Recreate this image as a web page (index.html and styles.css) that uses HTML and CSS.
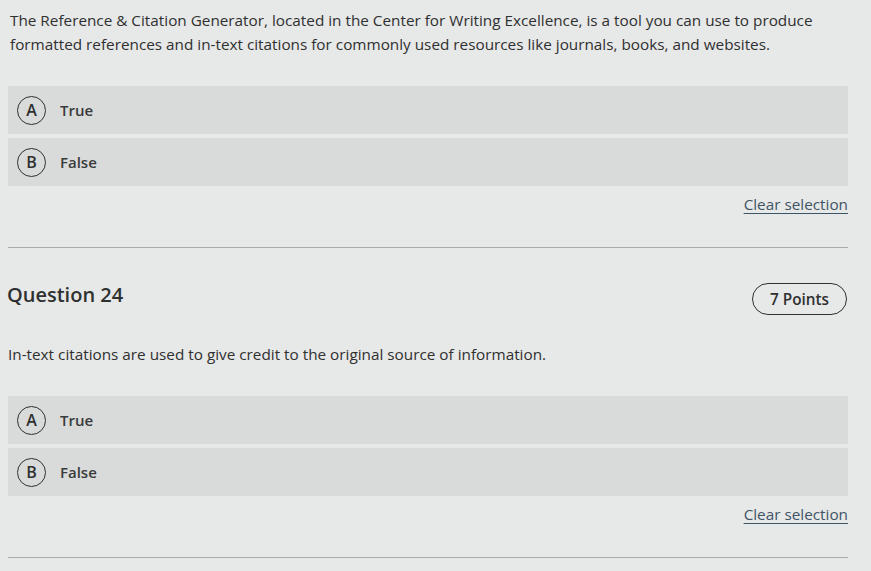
FILE: index.html
```html
<!DOCTYPE html>
<html>
<head>
<meta charset="utf-8">
<link rel="stylesheet" href="styles.css">
</head>
<body>
<div class="page">
  <section class="question">
    <p class="prompt">The Reference &amp; Citation Generator, located in the Center for Writing Excellence, is a tool you can use to produce formatted references and in-text citations for commonly used resources like journals, books, and websites.</p>
    <div class="options">
      <div class="option"><span class="letter">A</span><span class="label">True</span></div>
      <div class="option"><span class="letter">B</span><span class="label">False</span></div>
    </div>
    <div class="clear-row"><a class="clear" href="#">Clear selection</a></div>
  </section>
  <hr class="divider">
  <section class="question q2">
    <div class="head">
      <h2 class="title">Question 24</h2>
      <span class="points">7 Points</span>
    </div>
    <p class="prompt">In-text citations are used to give credit to the original source of information.</p>
    <div class="options">
      <div class="option"><span class="letter">A</span><span class="label">True</span></div>
      <div class="option"><span class="letter">B</span><span class="label">False</span></div>
    </div>
    <div class="clear-row"><a class="clear" href="#">Clear selection</a></div>
  </section>
  <hr class="divider">
</div>
</body>
</html>
```
FILE: styles.css
```css
html, body {
  margin: 0;
  padding: 0;
  background: #e7e8e8;
  height: 100%;
  overflow: hidden;
}
body {
  font-family: "Open Sans", "Liberation Sans", sans-serif;
  color: #2f3030;
}
.page {
  width: 840px;
  padding: 8px 0 0 8px;
}
.prompt {
  margin: 0 0 0 2px;
  font-size: 15.3px;
  line-height: 24px;
}
.options {
  margin-top: 30px;
  display: flex;
  flex-direction: column;
  gap: 4px;
}
.option {
  height: 48px;
  background: #d9dada;
  display: flex;
  align-items: center;
  padding-left: 9px;
  gap: 14px;
}
.letter {
  flex: none;
  box-sizing: border-box;
  width: 29px;
  height: 29px;
  border: 1.7px solid #2f3030;
  border-radius: 50%;
  display: flex;
  align-items: center;
  justify-content: center;
  font-size: 16px;
  font-weight: 600;
  line-height: 1;
}
.label {
  font-size: 15px;
  font-weight: 600;
  color: #3a3b3b;
}
.clear-row {
  display: flex;
  justify-content: flex-end;
  margin-top: 6px;
}
.clear {
  font-size: 15.3px;
  line-height: 24px;
  color: #3e5566;
  text-decoration: underline;
  text-underline-offset: 3px;
}
.divider {
  margin: 31px 0 0 0;
  border: none;
  border-top: 1px solid #a9aaaa;
  height: 0;
}
.q2 {
  padding-top: 34px;
}
.head {
  display: flex;
  align-items: flex-start;
  justify-content: space-between;
}
.title {
  margin: 0 0 0 -1px;
  font-size: 20px;
  font-weight: 600;
  line-height: 26px;
}
.points {
  flex: none;
  box-sizing: border-box;
  width: 95px;
  height: 32px;
  margin-top: 1px;
  margin-right: 1px;
  border: 1.5px solid #2f3030;
  border-radius: 16px;
  display: flex;
  align-items: center;
  justify-content: center;
  font-size: 15.3px;
  font-weight: 600;
}
.q2 .prompt {
  margin-top: 27px;
  margin-left: 0;
}
.q2 .divider {
  margin-top: 29px;
}
```
